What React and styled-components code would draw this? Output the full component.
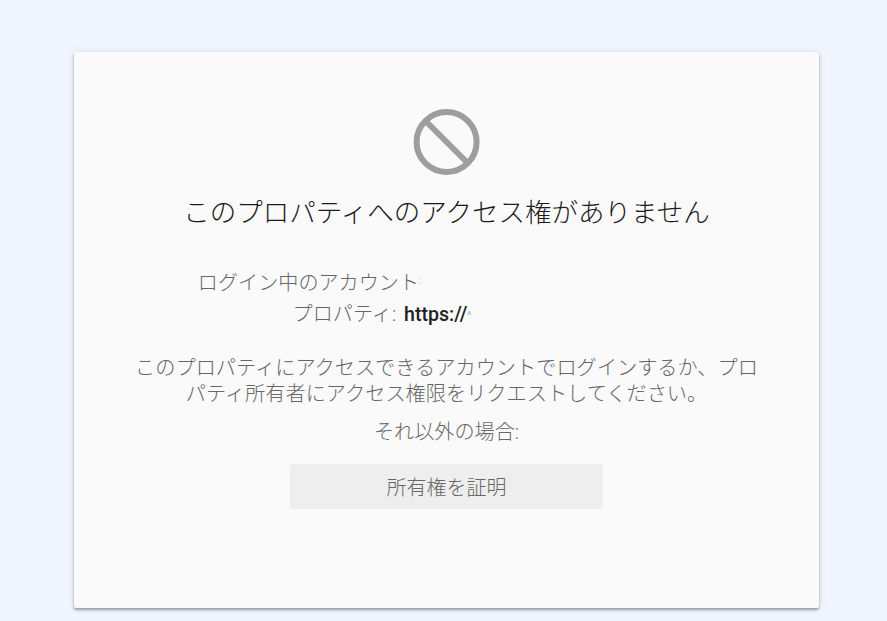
import styled, { createGlobalStyle } from "styled-components";

const GlobalStyle = createGlobalStyle`
  html, body {
    margin: 0;
    padding: 0;
    background: #f1f5fe;
  }
  body {
    font-family: Roboto, "Noto Sans CJK JP", sans-serif;
    font-weight: 300;
  }
`;

const Page = styled.div`
  width: 887px;
  height: 621px;
  padding-top: 52px;
  box-sizing: border-box;
  overflow: hidden;
`;

const Card = styled.main`
  width: 745px;
  height: 556px;
  margin-left: 74px;
  box-sizing: border-box;
  padding: 57px 64px 0;
  background: #fafafa;
  border-radius: 2px;
  box-shadow: 0 2px 3px rgba(0, 0, 0, 0.35), 0 0 8px rgba(0, 0, 0, 0.08);
  display: flex;
  flex-direction: column;
  align-items: center;
  text-align: center;
`;

const Icon = styled.svg`
  width: 68px;
  height: 68px;
  display: block;
`;

const Title = styled.h1`
  margin: 18px 0 0;
  font-size: 26.5px;
  line-height: 36px;
  font-weight: 300;
  color: #1c1c1c;
  white-space: nowrap;
`;

const Details = styled.div`
  margin-top: 37px;
  width: 100%;
`;

const DetailRow = styled.div`
  height: 31px;
  font-size: 20.13px;
  line-height: 31px;
  color: #666666;
  white-space: nowrap;
`;

const Value = styled.span`
  margin-left: 3px;
  color: #212121;
  font-weight: 500;
  font-size: 19.6px;
`;

const Redacted = styled.span`
  display: inline-block;
  width: ${(p) => p.$width}px;
`;

const Mark = styled.span`
  color: #8a8a8a;
  font-size: 10px;
  line-height: 1;
  vertical-align: ${(p) => p.$lift}px;
`;

const Message = styled.p`
  margin: 25px 0 0;
  font-size: 20.2px;
  line-height: 26px;
  color: #666666;
  width: 626px;
`;

const Other = styled.p`
  margin: 11px 0 0;
  font-size: 20.13px;
  line-height: 28px;
  color: #666666;
`;

const VerifyButton = styled.button`
  margin-top: 18px;
  width: 313px;
  height: 45px;
  border: 0;
  border-radius: 3px;
  background: #eeeeee;
  color: #666666;
  font-family: inherit;
  font-weight: 300;
  font-size: 20px;
  padding: 0;
`;

export default function App() {
  return (
    <>
      <GlobalStyle />
      <Page>
        <Card>
          <Icon viewBox="0 0 68 68" aria-hidden="true">
            <circle cx="33.6" cy="33" r="30" fill="none" stroke="#9e9e9e" strokeWidth="6" />
            <line x1="12.6" y1="12" x2="54.6" y2="54" stroke="#9e9e9e" strokeWidth="6" />
          </Icon>
          <Title>このプロパティへのアクセス権がありません</Title>
          <Details>
            <DetailRow>
              ログイン中のアカウント<Mark $lift={6}>:</Mark>
              <Redacted $width={274} />
            </DetailRow>
            <DetailRow>
              プロパティ: <Value>https://</Value>
              <Mark $lift={2}>^</Mark>
              <Redacted $width={129} />
            </DetailRow>
          </Details>
          <Message>
            このプロパティにアクセスできるアカウントでログインするか、プロパティ所有者にアクセス権限をリクエストしてください。
          </Message>
          <Other>それ以外の場合:</Other>
          <VerifyButton>所有権を証明</VerifyButton>
        </Card>
      </Page>
    </>
  );
}
